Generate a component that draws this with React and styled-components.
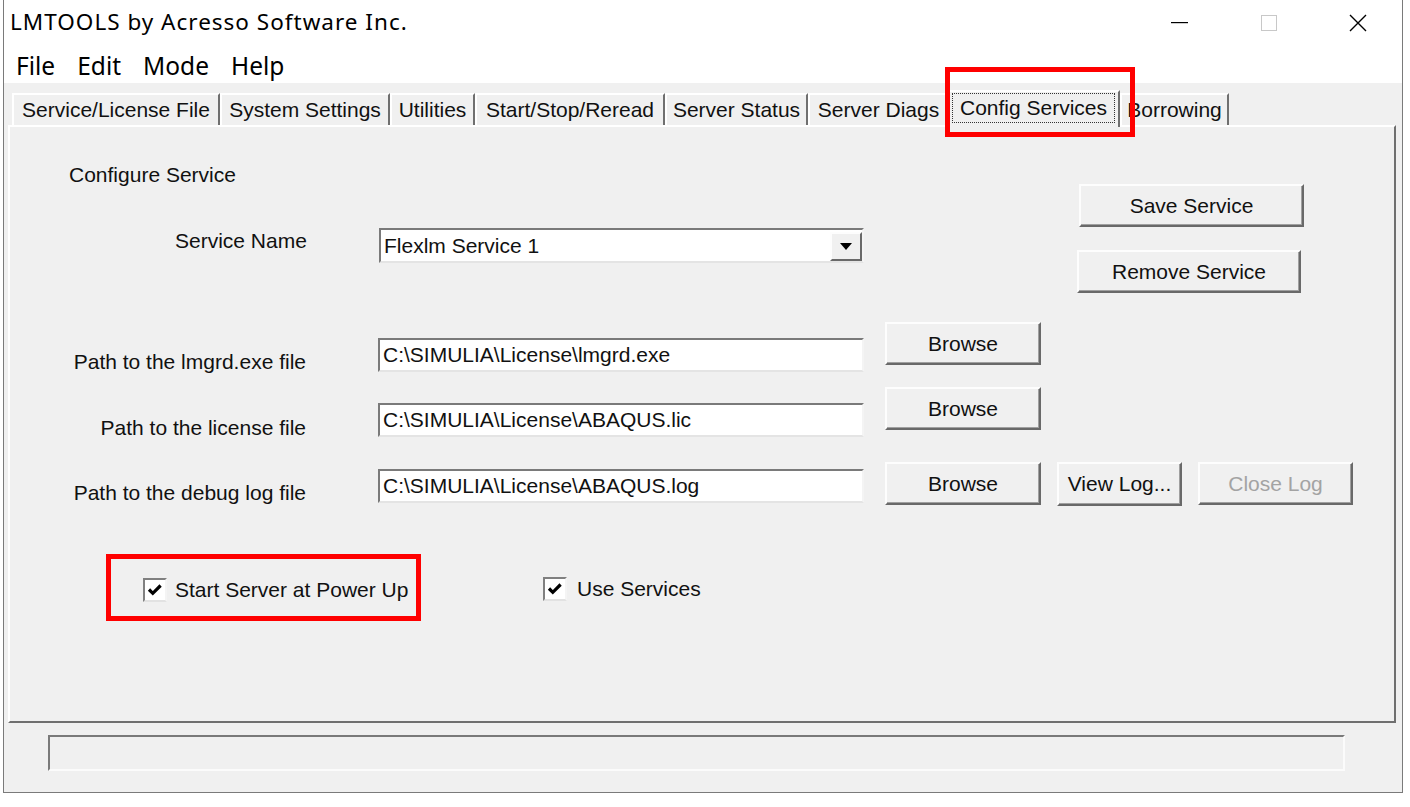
import React from "react";
import styled, { createGlobalStyle } from "styled-components";

const GlobalStyle = createGlobalStyle`
  html, body {
    margin: 0;
    padding: 0;
    background: #fff;
  }
  body {
    font-family: "Liberation Sans", Arial, sans-serif;
    color: #000;
  }
`;

const tabs = [
  { label: "Service/License File", w: 208 },
  { label: "System Settings", w: 170 },
  { label: "Utilities", w: 85 },
  { label: "Start/Stop/Reread", w: 190 },
  { label: "Server Status", w: 143 },
  { label: "Server Diags", w: 141 },
  { label: "Config Services", w: 173, active: true },
  { label: "Borrowing", w: 109 },
];

const pathRows = [
  {
    label: "Path to the lmgrd.exe file",
    value: "C:\\SIMULIA\\License\\lmgrd.exe",
    h: 65,
    labelTop: 28,
    inputTop: 16,
  },
  {
    label: "Path to the license file",
    value: "C:\\SIMULIA\\License\\ABAQUS.lic",
    h: 75,
    labelTop: 29,
    inputTop: 16,
  },
  {
    label: "Path to the debug log file",
    value: "C:\\SIMULIA\\License\\ABAQUS.log",
    h: 45,
    labelTop: 19,
    inputTop: 7,
    logButtons: true,
  },
];

const Page = styled.div`
  width: 1410px;
  height: 807px;
  overflow: hidden;
  background: #fff;
`;

const Window = styled.div`
  margin-left: 3px;
  width: 1398px;
  height: 792px;
  border-left: 1px solid #7a7a7a;
  border-right: 1px solid #7a7a7a;
  border-bottom: 1px solid #7a7a7a;
  display: flex;
  flex-direction: column;
`;

const TitleBar = styled.div`
  height: 45px;
  display: flex;
  align-items: center;
  background: #fff;
`;

const Title = styled.div`
  padding-left: 6px;
  font-family: "Noto Sans", "Open Sans", sans-serif;
  font-size: 22.5px;
  letter-spacing: 1px;
  line-height: 26px;
  padding-bottom: 1px;
`;

const Controls = styled.div`
  margin-left: auto;
  display: flex;
  height: 100%;
`;

const Control = styled.div`
  width: 89px;
  height: 100%;
  display: flex;
  align-items: center;
  justify-content: center;
`;

const MenuBar = styled.div`
  height: 38px;
  display: flex;
  align-items: center;
  gap: 22px;
  padding-left: 12px;
  padding-top: 2px;
  box-sizing: border-box;
  background: #fff;
  font-family: "Noto Sans", "Open Sans", sans-serif;
  font-size: 24.5px;
`;

const Body = styled.div`
  flex: 1;
  background: #f0f0f0;
  display: flex;
  flex-direction: column;
`;

const TabStrip = styled.div`
  height: 42px;
  display: flex;
  align-items: flex-end;
  padding-left: 8px;
`;

const Tab = styled.div`
  position: relative;
  z-index: ${(p) => (p.$active ? 2 : 1)};
  box-sizing: border-box;
  width: ${(p) => p.$w}px;
  height: ${(p) => (p.$active ? 37 : 32)}px;
  margin-left: ${(p) => (p.$active ? -2 : 0)}px;
  margin-bottom: ${(p) => (p.$active ? -2 : 0)}px;
  padding-top: ${(p) => (p.$active ? 1 : 3)}px;
  background: #f0f0f0;
  border-top: 2px solid #fff;
  border-left: 2px solid #fff;
  border-right: 2px solid #6f6f6f;
  display: flex;
  justify-content: center;
  align-items: flex-start;
  font-size: 21px;
  line-height: 24px;
  color: #111;
  white-space: nowrap;
`;

const FocusRect = styled.div`
  box-sizing: border-box;
  width: 163px;
  height: 30px;
  border: 1px dotted #333;
  display: flex;
  align-items: center;
  justify-content: center;
  padding-bottom: 1px;
`;

const Highlight = styled.div`
  position: absolute;
  left: -4px;
  top: -25px;
  width: 190px;
  height: 70px;
  box-sizing: border-box;
  border: 5px solid #ff0000;
  pointer-events: none;
`;

const Panel = styled.div`
  position: relative;
  z-index: 0;
  box-sizing: border-box;
  height: 598px;
  margin: 0 6px 0 4px;
  padding-top: 36px;
  border-top: 2px solid #fff;
  border-left: 2px solid #fff;
  border-right: 2px solid #6f6f6f;
  border-bottom: 2px solid #6f6f6f;
  font-size: 21px;
  line-height: 24px;
  color: #111;
`;

const TopSection = styled.div`
  display: flex;
  justify-content: space-between;
  align-items: flex-start;
  padding-right: 90px;
`;

const LeftColumn = styled.div`
  display: flex;
  flex-direction: column;
`;

const SectionTitle = styled.div`
  padding-left: 59px;
`;

const ServiceRow = styled.div`
  margin-top: 41px;
  display: flex;
  align-items: flex-start;
  padding-left: 165px;
`;

const FieldLabel = styled.div`
  flex: none;
  width: ${(p) => p.$w}px;
  margin-top: ${(p) => p.$top || 0}px;
  text-align: ${(p) => p.$align || "left"};
  white-space: nowrap;
`;

const RightColumn = styled.div`
  margin-top: 21px;
  display: flex;
  flex-direction: column;
  align-items: flex-end;
  gap: 23px;
`;

const Button = styled.div`
  flex: none;
  box-sizing: border-box;
  width: ${(p) => p.$w}px;
  height: ${(p) => p.$h || 43}px;
  margin-left: ${(p) => p.$ml || 0}px;
  margin-right: ${(p) => p.$mr || 0}px;
  background: #f0f0f0;
  border-top: 2px solid #fdfdfd;
  border-left: 2px solid #fdfdfd;
  border-right: 2px solid #696969;
  border-bottom: 2px solid #696969;
  box-shadow: inset -1px -1px 0 #a0a0a0;
  display: flex;
  align-items: center;
  justify-content: center;
  color: ${(p) => (p.$disabled ? "#a3a3a3" : "#111")};
  white-space: nowrap;
`;

const Field = styled.div`
  flex: none;
  position: relative;
  box-sizing: border-box;
  width: ${(p) => p.$w}px;
  height: ${(p) => p.$h || 34}px;
  margin-top: ${(p) => p.$top || 0}px;
  margin-left: ${(p) => p.$ml || 0}px;
  background: #fff;
  border-top: 2px solid #7a7a7a;
  border-left: 2px solid #7a7a7a;
  border-right: 2px solid #f4f4f4;
  border-bottom: 2px solid #e4e4e4;
  padding-left: 3px;
  display: flex;
  align-items: center;
  white-space: nowrap;
`;

const DropButton = styled.div`
  box-sizing: border-box;
  margin-left: auto;
  width: 32px;
  height: 29px;
  align-self: flex-end;
  background: #f0f0f0;
  border-top: 2px solid #fdfdfd;
  border-left: 2px solid #fdfdfd;
  border-right: 2px solid #696969;
  border-bottom: 2px solid #696969;
  display: flex;
  align-items: center;
  justify-content: center;
`;

const PathList = styled.div`
  margin-top: 29px;
  display: flex;
  flex-direction: column;
`;

const PathRow = styled.div`
  height: ${(p) => p.$h}px;
  display: flex;
  align-items: flex-start;
`;

const CheckRow = styled.div`
  margin-top: 47px;
  display: flex;
  align-items: center;
  padding-left: 96px;
`;

const RedBox = styled.div`
  box-sizing: border-box;
  width: 315px;
  height: 67px;
  border: 5px solid #ff0000;
  padding: 4px 0 0 32px;
  display: flex;
  align-items: center;
`;

const CheckItem = styled.div`
  display: flex;
  align-items: center;
  margin-left: ${(p) => p.$ml || 0}px;
  margin-top: ${(p) => p.$mt || 0}px;
`;

const Box = styled.div`
  box-sizing: border-box;
  width: 24px;
  height: 24px;
  background: #fff;
  border-top: 2px solid #808080;
  border-left: 2px solid #808080;
  border-right: 2px solid #f4f4f4;
  border-bottom: 2px solid #e2e2e2;
  display: flex;
  align-items: center;
  justify-content: center;
  margin-right: ${(p) => p.$gap}px;
`;

const StatusRow = styled.div`
  padding: 12px 0 0 44px;
`;

const StatusBox = styled.div`
  box-sizing: border-box;
  width: 1297px;
  height: 36px;
  border-top: 2px solid #7a7a7a;
  border-left: 2px solid #7a7a7a;
  border-right: 2px solid #fbfbfb;
  border-bottom: 2px solid #fbfbfb;
`;

const Check = () => (
  <svg width="16" height="16" viewBox="0 0 16 16">
    <path d="M2 7.5 L5.8 11.3 L13.6 3.5" fill="none" stroke="#000" strokeWidth="3.2" />
  </svg>
);

const CheckBox = ({ label, gap, ml, mt }) => (
  <CheckItem $ml={ml} $mt={mt}>
    <Box $gap={gap}>
      <Check />
    </Box>
    <span>{label}</span>
  </CheckItem>
);

export default function App() {
  return (
    <Page>
      <GlobalStyle />
      <Window>
        <TitleBar>
          <Title>LMTOOLS by Acresso Software Inc.</Title>
          <Controls>
            <Control>
              <svg width="17" height="2" viewBox="0 0 17 2">
                <rect x="0" y="0" width="17" height="1.2" fill="#000" />
              </svg>
            </Control>
            <Control>
              <svg width="16" height="16" viewBox="0 0 16 16">
                <rect x="0.5" y="0.5" width="15" height="15" fill="none" stroke="#c8c8c8" />
              </svg>
            </Control>
            <Control>
              <svg width="18" height="18" viewBox="0 0 18 18">
                <path d="M1 1 L17 17 M17 1 L1 17" stroke="#000" strokeWidth="1.4" />
              </svg>
            </Control>
          </Controls>
        </TitleBar>
        <MenuBar>
          <span>File</span>
          <span>Edit</span>
          <span>Mode</span>
          <span>Help</span>
        </MenuBar>
        <Body>
          <TabStrip>
            {tabs.map((t) =>
              t.active ? (
                <Tab key={t.label} $w={t.w} $active>
                  <FocusRect>{t.label}</FocusRect>
                  <Highlight />
                </Tab>
              ) : (
                <Tab key={t.label} $w={t.w}>
                  {t.label}
                </Tab>
              )
            )}
          </TabStrip>
          <Panel>
            <TopSection>
              <LeftColumn>
                <SectionTitle>Configure Service</SectionTitle>
                <ServiceRow>
                  <FieldLabel $w={204} $top={1}>
                    Service Name
                  </FieldLabel>
                  <Field $w={485} $h={35}>
                    Flexlm Service 1
                    <DropButton>
                      <svg width="12" height="7" viewBox="0 0 12 7">
                        <path d="M0 0 L12 0 L6 7 Z" fill="#000" />
                      </svg>
                    </DropButton>
                  </Field>
                </ServiceRow>
              </LeftColumn>
              <RightColumn>
                <Button $w={225}>Save Service</Button>
                <Button $w={224} $mr={3}>
                  Remove Service
                </Button>
              </RightColumn>
            </TopSection>

            <PathList>
              {pathRows.map((r) => (
                <PathRow key={r.label} $h={r.h}>
                  <FieldLabel $w={296} $top={r.labelTop} $align="right">
                    {r.label}
                  </FieldLabel>
                  <Field $w={486} $top={r.inputTop} $ml={72}>
                    {r.value}
                  </Field>
                  <Button $w={156} $ml={21}>
                    Browse
                  </Button>
                  {r.logButtons && (
                    <>
                      <Button $w={125} $h={44} $ml={16}>
                        View Log...
                      </Button>
                      <Button $w={155} $ml={16} $disabled>
                        Close Log
                      </Button>
                    </>
                  )}
                </PathRow>
              ))}
            </PathList>

            <CheckRow>
              <RedBox>
                <CheckBox label="Start Server at Power Up" gap={8} />
              </RedBox>
              <CheckBox label="Use Services" gap={10} ml={122} mt={2} />
            </CheckRow>
          </Panel>
          <StatusRow>
            <StatusBox />
          </StatusRow>
        </Body>
      </Window>
    </Page>
  );
}
